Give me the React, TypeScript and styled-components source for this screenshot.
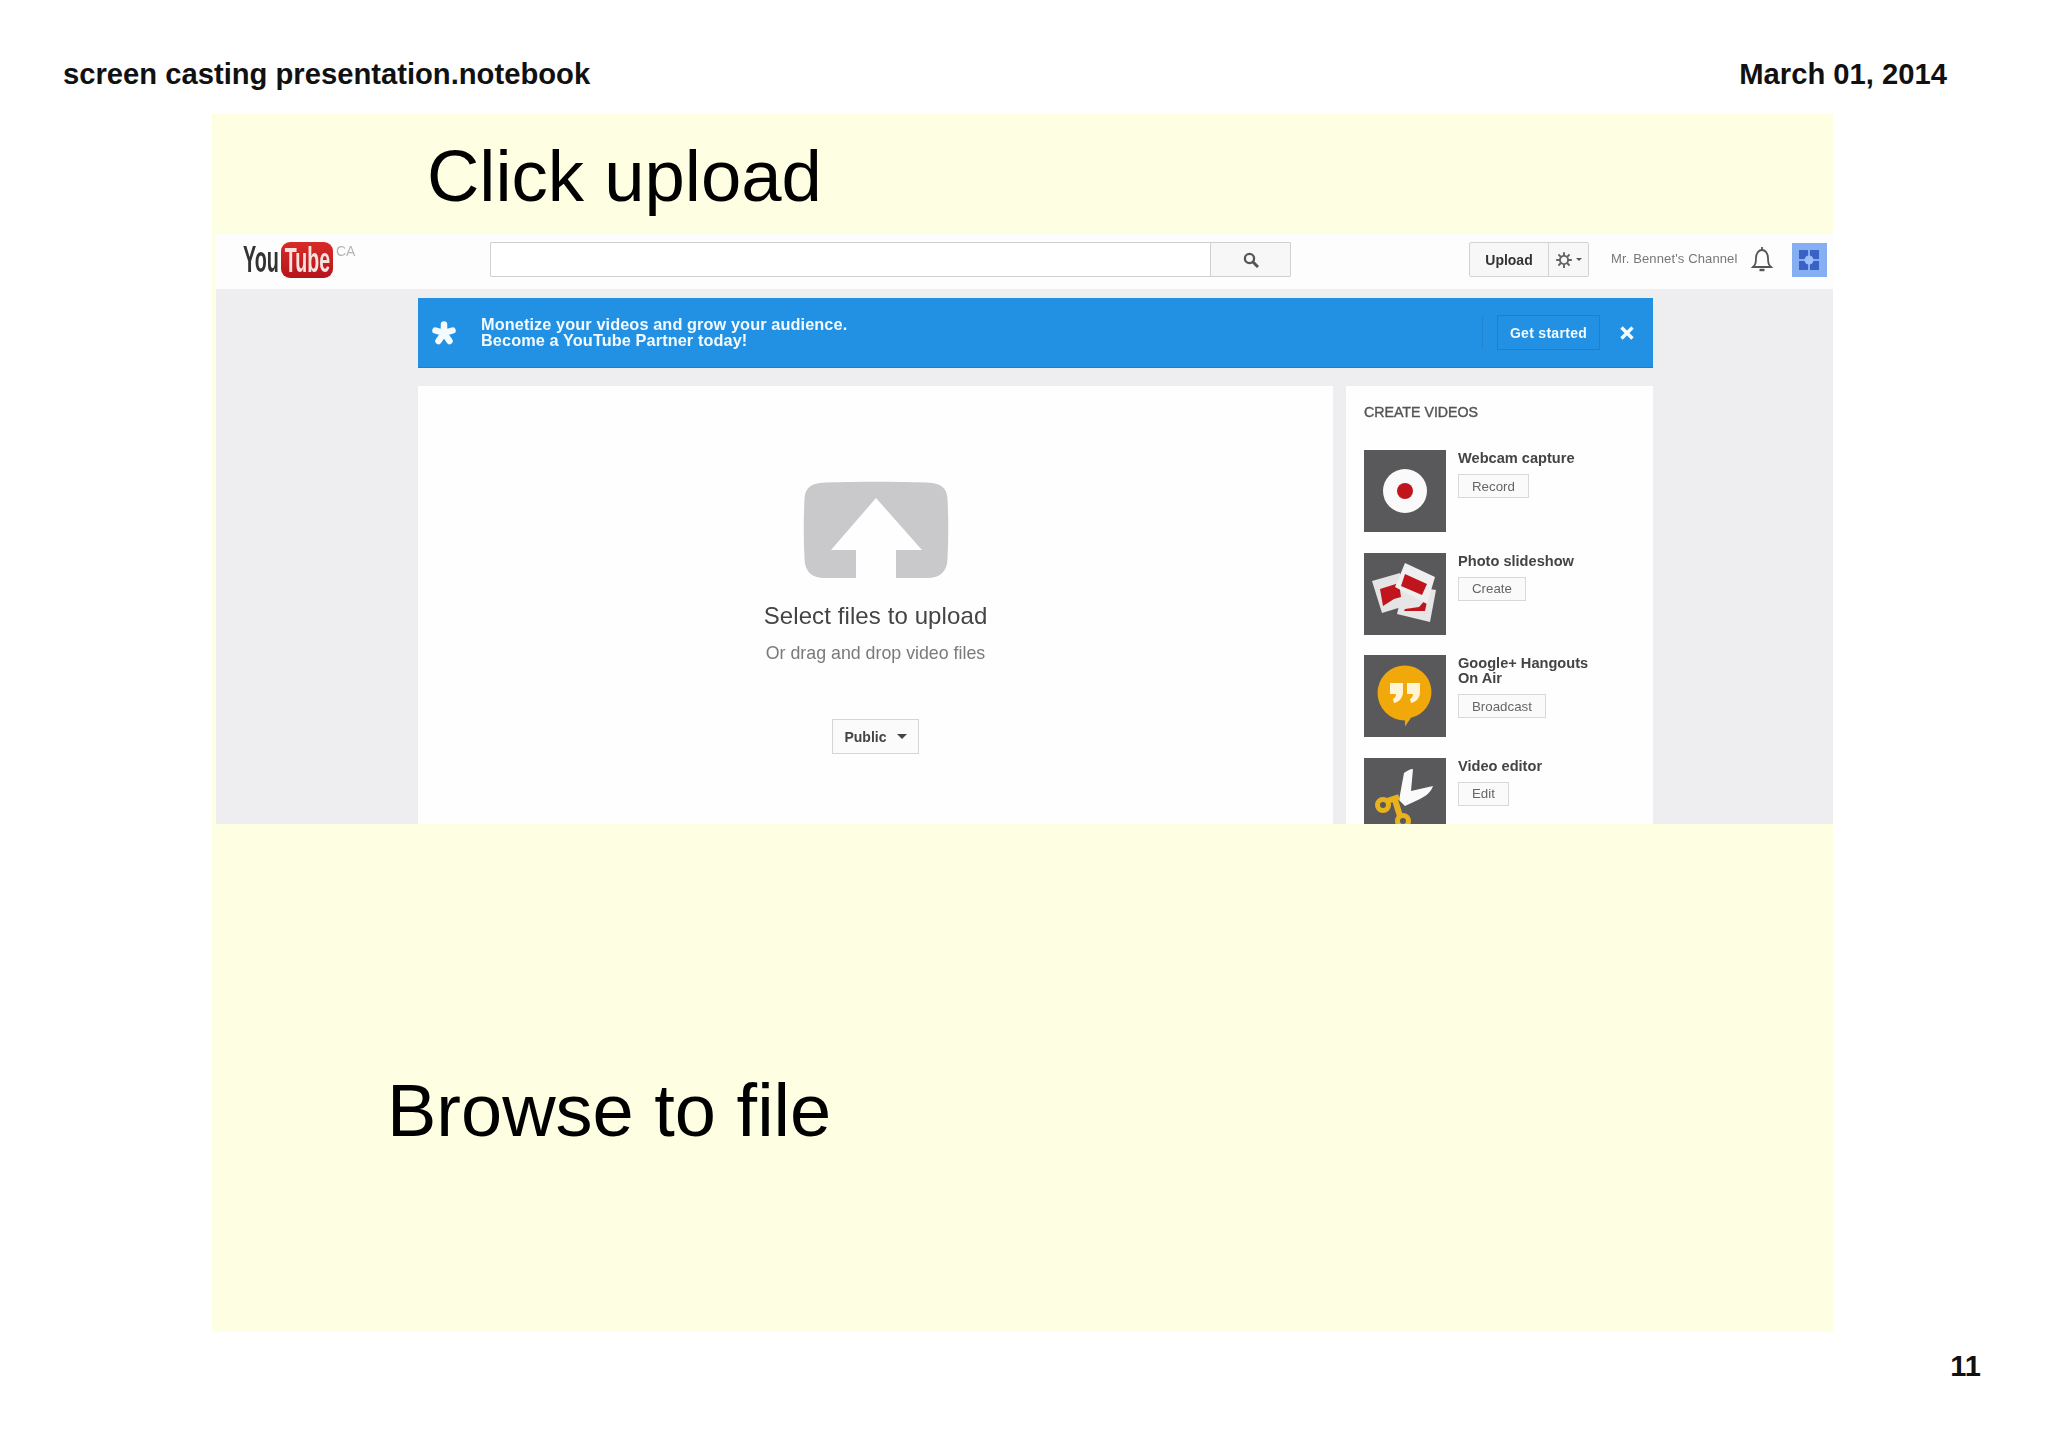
import React from "react";
import styled, { createGlobalStyle } from "styled-components";

const Global = createGlobalStyle`
  html, body { margin: 0; padding: 0; background: #fff; }
  body { font-family: "Liberation Sans", Arial, sans-serif; }
`;

const Page = styled.div`
  width: 2048px;
  height: 1447px;
  display: flex;
  flex-direction: column;
  overflow: hidden;
  color: #000;
`;
const PageHeader = styled.header`
  height: 114px;
  box-sizing: border-box;
  padding: 56px 101px 0 63px;
  display: flex;
  justify-content: space-between;
  font-size: 29.2px;
  line-height: 36px;
  font-weight: 700;
  color: #111;
`;
const Slide = styled.section`
  width: 1621px;
  height: 1218px;
  margin-left: 212px;
  background: #fefee2;
  display: flex;
  flex-direction: column;
`;
const Heading = styled.h1<{ $indent: number; $height: number; $pad: number; $size: number }>`
  margin: 0;
  height: ${(p) => p.$height}px;
  box-sizing: border-box;
  padding: ${(p) => p.$pad}px 0 0 ${(p) => p.$indent}px;
  font-size: ${(p) => p.$size}px;
  line-height: 84px;
  font-weight: 400;
  color: #000;
`;
const Shot = styled.div`
  margin-left: 4px;
  width: 1617px;
  height: 590px;
  background: #eeeef0;
  overflow: hidden;
  display: flex;
  flex-direction: column;
  filter: blur(0.45px);
`;
const Masthead = styled.div`
  height: 56px;
  flex: none;
  background: #fdfdfd;
  display: flex;
  align-items: center;
  padding: 0 0 4px 27px;
  box-sizing: border-box;
  border-bottom: 1px solid #ececec;
`;
const Logo = styled.div`
  width: 110px;
  flex: none;
  display: flex;
  align-items: flex-start;
  height: 38px;
`;
const LogoYou = styled.span`
  font-weight: 700;
  font-size: 36px;
  line-height: 38px;
  color: #333;
  display: inline-block;
  transform: scaleX(0.55);
  transform-origin: left center;
  width: 38px;
`;
const LogoTube = styled.span`
  width: 52px;
  height: 36px;
  margin-top: 1px;
  border-radius: 9px;
  background: linear-gradient(#d92b27, #b5151a);
  color: #f6e3e0;
  display: flex;
  justify-content: center;
  font-weight: 700;
  font-size: 35px;
  line-height: 36px;
`;
const LogoTubeText = styled.span`
  display: inline-block;
  transform: scaleX(0.56);
  white-space: nowrap;
`;
const LogoRegion = styled.span`
  font-size: 14px;
  line-height: 14px;
  color: #b5b5b5;
  margin: 3px 0 0 3px;
`;
const Search = styled.div`
  margin-left: 137px;
  flex: none;
  display: flex;
  width: 801px;
  height: 35px;
  box-sizing: border-box;
  border: 1px solid #d0d0d0;
  border-radius: 1px;
  background: #fff;
`;
const SearchInput = styled.div`
  flex: 1;
`;
const SearchButton = styled.div`
  width: 79px;
  background: #f7f7f7;
  border-left: 1px solid #d0d0d0;
  display: flex;
  align-items: center;
  justify-content: center;
`;
const ButtonGroup = styled.div`
  margin-left: 178px;
  flex: none;
  display: flex;
  width: 120px;
  height: 35px;
  box-sizing: border-box;
  border: 1px solid #d3d3d3;
  border-radius: 2px;
  background: #f7f7f7;
`;
const UploadButton = styled.div`
  width: 78px;
  font-size: 14px;
  font-weight: 700;
  color: #333;
  display: flex;
  align-items: center;
  justify-content: center;
  border-right: 1px solid #d3d3d3;
`;
const GearButton = styled.div`
  flex: 1;
  display: flex;
  align-items: center;
  justify-content: center;
  gap: 3px;
`;
const Caret = styled.span<{ $size?: number; $color?: string }>`
  width: 0;
  height: 0;
  border-left: ${(p) => p.$size ?? 3}px solid transparent;
  border-right: ${(p) => p.$size ?? 3}px solid transparent;
  border-top: ${(p) => p.$size ?? 3}px solid ${(p) => p.$color ?? "#555"};
`;
const ChannelName = styled.span`
  margin-left: 22px;
  flex: none;
  font-size: 13px;
  letter-spacing: 0.13px;
  color: #777;
  white-space: nowrap;
  position: relative;
  top: -1px;
`;
const BellWrap = styled.span`
  margin-left: 12px;
  flex: none;
  display: flex;
`;
const Avatar = styled.div`
  margin-left: 18px;
  flex: none;
  width: 35px;
  height: 34px;
  background: #85aef3;
  display: flex;
  align-items: center;
  justify-content: center;
`;
const Content = styled.div`
  margin: 8px 0 0 202px;
  width: 1235px;
  display: flex;
  flex-direction: column;
`;
const Banner = styled.div`
  height: 69px;
  background: #2391e3;
  display: flex;
  align-items: center;
  color: #f2faff;
  box-shadow: 0 1px 0 #1c7fc9;
`;
const BannerStar = styled.span`
  width: 52px;
  margin-right: 11px;
  display: flex;
  justify-content: center;
  flex: none;
`;
const BannerText = styled.div`
  flex: 1;
  padding-bottom: 2px;
  font-size: 16.3px;
  line-height: 16px;
  font-weight: 700;
  letter-spacing: 0.1px;
`;
const BannerDivider = styled.span`
  width: 1px;
  height: 34px;
  background: #2284cf;
`;
const GetStarted = styled.div`
  margin-left: 14px;
  width: 103px;
  height: 35px;
  box-sizing: border-box;
  border: 1px solid #1f80ca;
  display: flex;
  align-items: center;
  justify-content: center;
  font-size: 14px;
  font-weight: 700;
  letter-spacing: 0.3px;
`;
const Close = styled.span`
  width: 53px;
  display: flex;
  justify-content: center;
`;
const Columns = styled.div`
  margin-top: 19px;
  display: flex;
  gap: 13px;
  align-items: flex-start;
`;
const UploadPanel = styled.div`
  width: 915px;
  height: 500px;
  background: #fefefe;
  display: flex;
  flex-direction: column;
  align-items: center;
  padding-top: 95px;
  box-sizing: border-box;
`;
const SelectTitle = styled.div`
  margin-top: 23px;
  font-size: 24px;
  line-height: 28px;
  color: #444;
  letter-spacing: 0.1px;
`;
const SelectHint = styled.div`
  margin-top: 12px;
  font-size: 17.8px;
  line-height: 22px;
  color: #7a7a7a;
`;
const PrivacyButton = styled.div`
  margin-top: 55px;
  width: 87px;
  height: 35px;
  box-sizing: border-box;
  border: 1px solid #d5d5d5;
  background: #fbfbfb;
  display: flex;
  align-items: center;
  justify-content: center;
  gap: 10px;
  font-size: 14px;
  font-weight: 700;
  color: #444;
`;
const Sidebar = styled.aside`
  width: 307px;
  height: 500px;
  box-sizing: border-box;
  background: #fefefe;
  padding: 17px 18px 0;
`;
const SidebarTitle = styled.div`
  font-size: 14.2px;
  line-height: 18px;
  font-weight: 400;
  color: #555;
  -webkit-text-stroke: 0.4px #555;
  margin-bottom: 29px;
`;
const Item = styled.div`
  display: flex;
  gap: 12px;
  height: 102.5px;
`;
const Thumb = styled.div`
  width: 82px;
  height: 82px;
  background: #59595b;
  flex: none;
  display: flex;
  overflow: hidden;
`;
const ItemBody = styled.div`
  display: flex;
  flex-direction: column;
  align-items: flex-start;
  padding-top: 1px;
`;
const ItemTitle = styled.div`
  font-size: 14.6px;
  line-height: 15px;
  font-weight: 700;
  color: #444;
  margin-bottom: 8px;
`;
const ItemButton = styled.div`
  height: 24px;
  box-sizing: border-box;
  border: 1px solid #d8d8d8;
  background: #fafafa;
  padding: 0 13px;
  display: flex;
  align-items: center;
  font-size: 13.3px;
  color: #666;
`;

const Bell = () => (
  <svg width="24" height="28" viewBox="0 0 24 28" fill="none" stroke="#555" strokeWidth="1.8">
    <path d="M3 21c2-2 3-3 3-9 0-5 3-8 6-8s6 3 6 8c0 6 1 7 3 9z" />
    <path d="M12 1v3" />
    <path d="M9.500 24h5" strokeWidth="2.400" />
  </svg>
);

const Gear = () => (
  <svg width="18" height="18" viewBox="0 0 24 24" fill="none" stroke="#666" strokeWidth="2.600">
    <circle cx="12" cy="12" r="5.500" />
    <path d="M12 1.500v5M12 17.500v5M1.500 12h5M17.500 12h5M4.600 4.600l3.500 3.500M15.900 15.900l3.500 3.500M19.400 4.600l-3.500 3.500M8.100 15.900l-3.500 3.500" />
  </svg>
);

const SearchGlyph = () => (
  <svg width="16" height="16" viewBox="0 0 16 16" fill="none" stroke="#555" strokeWidth="2.300">
    <circle cx="6.500" cy="6.500" r="4.600" />
    <path d="M10 10l5 5" strokeWidth="3" />
  </svg>
);

const Asterisk = () => (
  <svg width="24" height="24" viewBox="0 0 24 24" fill="none" stroke="#f4fbff" strokeWidth="6.500" strokeLinecap="round">
    <path d="M12 12V3.500M12 12L3.500 9.500M12 12L20.500 9.500M12 12L6.500 20M12 12L17.500 20" />
  </svg>
);

const CloseGlyph = () => (
  <svg width="14" height="14" viewBox="0 0 14 14" stroke="#f4fbff" strokeWidth="3.400">
    <path d="M1.500 1.500l11 11M12.500 1.500l-11 11" />
  </svg>
);

const Puzzle = () => (
  <svg width="22" height="22" viewBox="0 0 22 22" fill="#3a62c4">
    <rect x="1" y="1" width="9" height="9" />
    <rect x="12" y="1" width="9" height="9" />
    <rect x="1" y="12" width="9" height="9" />
    <rect x="12" y="12" width="9" height="9" />
    <circle cx="11" cy="11" r="4.500" fill="#9cc0f7" />
  </svg>
);

const UploadIcon = () => (
  <svg width="146" height="98" viewBox="0 0 146 98">
    <path
      d="M53 97H22C8 97 2 90 1.500 78 0.500 58 0.500 38 1.500 18 2 7 8 2 22 1.500 55 0.500 91 0.500 124 1.500 138 2 144 7 144.500 18 145.500 38 145.500 58 144.500 78 144 90 138 97 124 97H93V69H119L73 17 28 69H53Z"
      fill="#c9c8cb"
    />
  </svg>
);

const RecordThumb = () => (
  <svg viewBox="0 0 82 82" width="82" height="82">
    <circle cx="41" cy="41" r="22" fill="#fafafa" />
    <circle cx="41" cy="41" r="8" fill="#c0151c" />
  </svg>
);

const SlidesThumb = () => (
  <svg viewBox="0 0 82 82" width="82" height="82">
    <polygon points="8,28 36,20 44,52 18,60" fill="#e4e4e4" />
    <polygon points="16,36 35,30 37,44 30,46 19,53" fill="#c0151c" />
    <polygon points="40,32 72,37 66,69 33,61" fill="#e6e6e6" />
    <polygon points="41,56 55,54 64,44 61,58 40,58" fill="#c0151c" />
    <polygon points="41,10 71,24 63,51 31,34" fill="#efefef" />
    <polygon points="41,21 63,31 58,42 37,33" fill="#c0151c" />
  </svg>
);

const HangoutThumb = () => (
  <svg viewBox="0 0 82 82" width="82" height="82">
    <path d="M41 10.500a26.500 26.500 0 0 1 6 52.300L41 71.500v-6a27 27 0 0 1 0-55z" fill="#f0a80b" />
    <path d="M26 28h13v9c0 6-4 10-9 11l-1-4c2-1 3-3 3-5h-6zM43 28h13v9c0 6-4 10-9 11l-1-4c2-1 3-3 3-5h-6z" fill="#fff4d6" />
  </svg>
);

const ScissorsThumb = () => (
  <svg viewBox="0 0 82 82" width="82" height="82">
    <path d="M35 42L40 15C43 13 46 11 49 11L47 33 69 28C67 34 62 38 56 41L41 48Z" fill="#fafafa" />
    <g fill="none" stroke="#e8b21e" strokeWidth="5">
      <circle cx="19" cy="47" r="5.500" />
      <circle cx="39" cy="63" r="5.500" />
      <path d="M23 43l12-4M36 58l-5-16" strokeWidth="6" />
    </g>
  </svg>
);

const items = [
  { title: ["Webcam capture"], action: "Record", art: <RecordThumb /> },
  { title: ["Photo slideshow"], action: "Create", art: <SlidesThumb /> },
  { title: ["Google+ Hangouts", "On Air"], action: "Broadcast", art: <HangoutThumb /> },
  { title: ["Video editor"], action: "Edit", art: <ScissorsThumb /> },
];

const PageNumber = styled.div`
  width: 1981px;
  margin-top: 16px;
  text-align: right;
  font-size: 29px;
  line-height: 36px;
  font-weight: 700;
  color: #111;
`;

export default function App() {
  return (
    <Page>
      <Global />
      <PageHeader>
        <span>screen casting presentation.notebook</span>
        <span>March 01, 2014</span>
      </PageHeader>
      <Slide>
        <Heading $indent={215} $height={120} $pad={20} $size={72.5}>Click upload</Heading>
        <Shot>
          <Masthead>
            <Logo>
              <LogoYou>You</LogoYou>
              <LogoTube><LogoTubeText>Tube</LogoTubeText></LogoTube>
              <LogoRegion>CA</LogoRegion>
            </Logo>
            <Search>
              <SearchInput />
              <SearchButton><SearchGlyph /></SearchButton>
            </Search>
            <ButtonGroup>
              <UploadButton>Upload</UploadButton>
              <GearButton><Gear /><Caret /></GearButton>
            </ButtonGroup>
            <ChannelName>Mr. Bennet's Channel</ChannelName>
            <BellWrap><Bell /></BellWrap>
            <Avatar><Puzzle /></Avatar>
          </Masthead>
          <Content>
            <Banner>
              <BannerStar><Asterisk /></BannerStar>
              <BannerText>
                Monetize your videos and grow your audience.<br />
                Become a YouTube Partner today!
              </BannerText>
              <BannerDivider />
              <GetStarted>Get started</GetStarted>
              <Close><CloseGlyph /></Close>
            </Banner>
            <Columns>
              <UploadPanel>
                <UploadIcon />
                <SelectTitle>Select files to upload</SelectTitle>
                <SelectHint>Or drag and drop video files</SelectHint>
                <PrivacyButton>Public <Caret $size={5} $color="#444" /></PrivacyButton>
              </UploadPanel>
              <Sidebar>
                <SidebarTitle>CREATE VIDEOS</SidebarTitle>
                {items.map((it) => (
                  <Item key={it.action}>
                    <Thumb>{it.art}</Thumb>
                    <ItemBody>
                      <ItemTitle>
                        {it.title.map((t) => <div key={t}>{t}</div>)}
                      </ItemTitle>
                      <ItemButton>{it.action}</ItemButton>
                    </ItemBody>
                  </Item>
                ))}
              </Sidebar>
            </Columns>
          </Content>
        </Shot>
        <Heading $indent={175} $height={508} $pad={245} $size={74}>Browse to file</Heading>
      </Slide>
      <PageNumber>11</PageNumber>
    </Page>
  );
}
